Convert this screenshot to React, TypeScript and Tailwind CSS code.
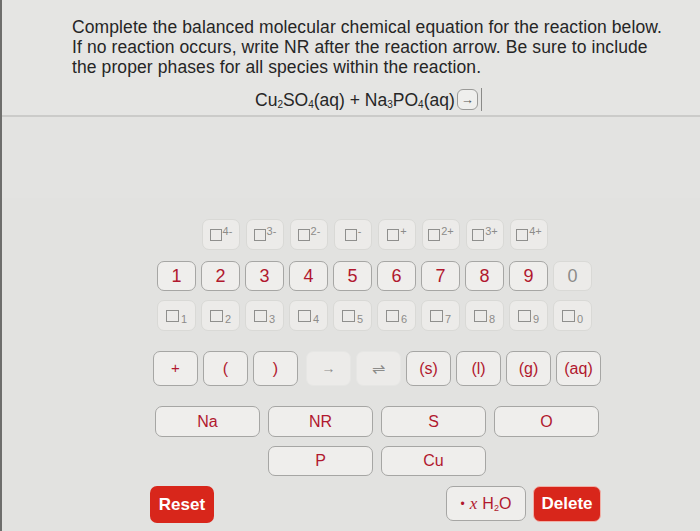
import React from "react";

const red = "text-[#b1182e]";

function Key({
  children,
  w,
  h,
  muted,
  className = "",
}: {
  children: React.ReactNode;
  w: string;
  h: string;
  muted?: boolean;
  className?: string;
}) {
  return (
    <div
      className={`flex shrink-0 items-center justify-center rounded-[7px] border ${w} ${h} ${
        muted
          ? "border-[#d9d9d6] bg-[#ecebe9] text-[#8c8c8a]"
          : `border-[#a6a6a4] bg-[#efeeec] ${red}`
      } ${className}`}
    >
      {children}
    </div>
  );
}

function Box({ size = "h-[12px] w-[12px]" }: { size?: string }) {
  return <span className={`inline-block border border-[#8f8f8d] ${size}`} />;
}

function Sub({ children }: { children: React.ReactNode }) {
  return <sub className="relative top-[2px] text-[10px]">{children}</sub>;
}

export default function App() {
  const charges = ["4-", "3-", "2-", "-", "+", "2+", "3+", "4+"];
  const digits = ["1", "2", "3", "4", "5", "6", "7", "8", "9"];
  const subs = ["1", "2", "3", "4", "5", "6", "7", "8", "9", "0"];

  return (
    <div
      className="flex h-[531px] w-[700px] flex-col overflow-hidden border-l-2 border-[#6e6e6c] bg-[#e2e2e0] text-[#262626]"
      style={{ fontFamily: '"Liberation Sans", Arial, sans-serif' }}
    >
      {/* question */}
      <div className="h-[115px] shrink-0 bg-[#e5e5e3] pl-[70px] pt-[17px]">
        <p className="w-[620px] text-[17.5px] leading-[20px] tracking-[0.1px]">
          Complete the balanced molecular chemical equation for the reaction below.
          <br />
          If no reaction occurs, write NR after the reaction arrow. Be sure to include
          <br />
          the proper phases for all species within the reaction.
        </p>
        <div className="mt-[11px] flex items-center pl-[183px] text-[17.5px] leading-[22px]">
          <span>
            Cu<Sub>2</Sub>SO<Sub>4</Sub>(aq) + Na<Sub>3</Sub>PO<Sub>4</Sub>(aq)
          </span>
          <span className="ml-[2px] flex h-[21px] w-[21px] items-center justify-center rounded-[6px] border border-[#9a9a98] bg-[#efefed] text-[13px] text-[#555]">
            →
          </span>
          <span className="ml-[3px] h-[23px] w-px bg-[#8a8a88]" />
        </div>
      </div>
      <div className="h-[2px] shrink-0 bg-[#cbcbc9]" />
      <div className="h-[81px] shrink-0 bg-[#e3e3e1]" />

      {/* keypad */}
      <div className="flex flex-col">
        <div className="ml-[200px] mt-[21px] flex gap-[6px]">
          {charges.map((c) => (
            <Key key={c} w="w-[38px]" h="h-[31px]" muted>
              <span className="flex items-center">
                <Box />
                <span className="ml-[1px] -translate-y-[4px] text-[11px] leading-[12px]">{c}</span>
              </span>
            </Key>
          ))}
        </div>

        <div className="ml-[155px] mt-[11px] flex gap-[5px]">
          {digits.map((d) => (
            <Key key={d} w="w-[39px]" h="h-[30px]" className="text-[18px]">
              {d}
            </Key>
          ))}
          <Key w="w-[39px]" h="h-[30px]" muted className="text-[18px]">
            0
          </Key>
        </div>

        <div className="ml-[155px] mt-[9px] flex gap-[5px]">
          {subs.map((s) => (
            <Key key={s} w="w-[39px]" h="h-[31px]" muted>
              <span className="flex items-center">
                <Box size="h-[12px] w-[13px]" />
                <span className="ml-[2px] translate-y-[4px] text-[11px] leading-[11px]">{s}</span>
              </span>
            </Key>
          ))}
        </div>

        <div className="ml-[151px] mt-[20px] flex gap-[5px]">
          <Key w="w-[45px]" h="h-[35px]" className="text-[15px]">+</Key>
          <Key w="w-[45px]" h="h-[35px]" className="text-[16px]">(</Key>
          <Key w="w-[45px]" h="h-[35px]" className="text-[16px]">)</Key>
          <Key w="w-[45px]" h="h-[35px]" muted className="ml-[3px] border-[#e6e6e4] text-[14px]">
            →
          </Key>
          <Key w="w-[45px]" h="h-[35px]" muted className="border-[#e6e6e4] text-[16px]">
            ⇌
          </Key>
          <Key w="w-[45px]" h="h-[35px]" className="text-[16px]">(s)</Key>
          <Key w="w-[45px]" h="h-[35px]" className="text-[16px]">(l)</Key>
          <Key w="w-[45px]" h="h-[35px]" className="text-[16px]">(g)</Key>
          <Key w="w-[45px]" h="h-[35px]" className="text-[16px]">(aq)</Key>
        </div>

        <div className="ml-[153px] mt-[20px] flex gap-[8px]">
          {["Na", "NR", "S", "O"].map((e) => (
            <Key key={e} w="w-[105px]" h="h-[31px]" className="text-[16px]">
              {e}
            </Key>
          ))}
        </div>

        <div className="ml-[266px] mt-[9px] flex gap-[8px]">
          {["P", "Cu"].map((e) => (
            <Key key={e} w="w-[105px]" h="h-[30px]" className="text-[16px]">
              {e}
            </Key>
          ))}
        </div>

        <div className="ml-[148px] mt-[10px] flex items-start">
          <div className="flex h-[37px] w-[64px] items-center justify-center rounded-[7px] bg-[#d8261b] text-[17px] font-bold text-white">
            Reset
          </div>
          <div className="ml-[232px] flex h-[35px] w-[80px] items-center justify-center rounded-[7px] border border-[#a6a6a4] bg-[#efeeec] text-[16px]">
            <span className={`${red} mr-[5px] text-[12px]`}>•</span>
            <span className={`${red} mr-[5px] text-[17px] italic`} style={{ fontFamily: '"Liberation Serif", serif' }}>
              x
            </span>
            <span className={red}>
              H<sub className="relative top-[2px] text-[9px]">2</sub>O
            </span>
          </div>
          <div className="ml-[7px] flex h-[36px] w-[68px] items-center justify-center rounded-[7px] border border-[#f0b0a8] bg-[#d8261b] text-[17px] font-bold text-white">
            Delete
          </div>
        </div>
      </div>
    </div>
  );
}
